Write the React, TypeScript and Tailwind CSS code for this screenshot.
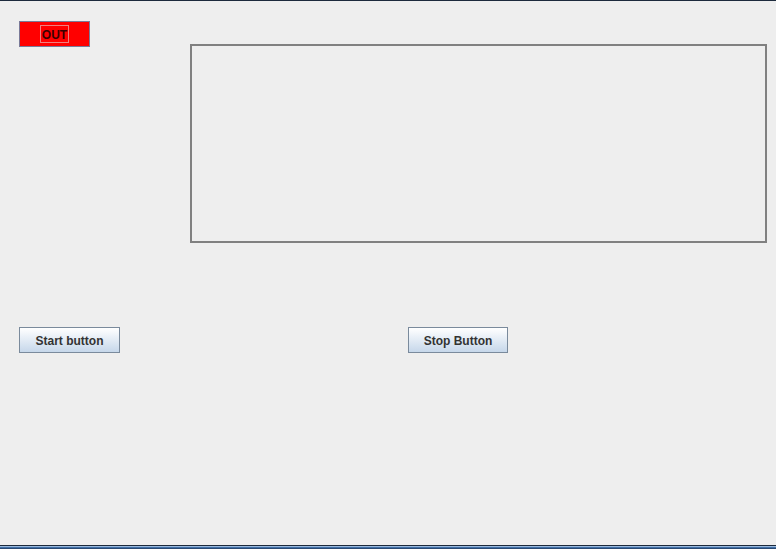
export default function App() {
  return (
    <div className="w-[776px] h-[549px] flex flex-col bg-[#eeeeee] font-['Liberation_Sans',Arial,sans-serif]">
      <div className="h-px bg-[#1c2a3c]" />
      <div className="flex-1 flex flex-col">
        <div className="flex items-start pl-[19px] pt-[20px]">
          <div className="w-[71px] h-[26px] bg-[#ff0000] border border-[#7a7a98] flex items-center justify-center">
            <span className="border border-[#f08080] px-[1px] pt-[2px] h-[18px] flex items-center text-[12px] font-bold text-[#3a0000] leading-none">
              OUT
            </span>
          </div>
          <div className="ml-[100px] mt-[23px] w-[577px] h-[199px] border-2 border-[#808080]" />
        </div>
        <div className="flex items-start pl-[19px] mt-[84px]">
          <button className="w-[101px] h-[26px] pt-[2px] border border-[#7a8a9c] bg-gradient-to-b from-[#ffffff] to-[#c6d7ea] text-[12px] font-bold text-[#333333]">
            Start button
          </button>
          <button className="ml-[288px] w-[100px] h-[26px] pt-[2px] border border-[#7a8a9c] bg-gradient-to-b from-[#ffffff] to-[#c6d7ea] text-[12px] font-bold text-[#333333]">
            Stop Button
          </button>
        </div>
      </div>
      <div className="h-px bg-[#1c2a3c]" />
      <div className="h-px bg-[#9ab8dc]" />
      <div className="h-px bg-[#3f6ea6]" />
      <div className="h-px bg-[#2a4a74]" />
    </div>
  );
}
